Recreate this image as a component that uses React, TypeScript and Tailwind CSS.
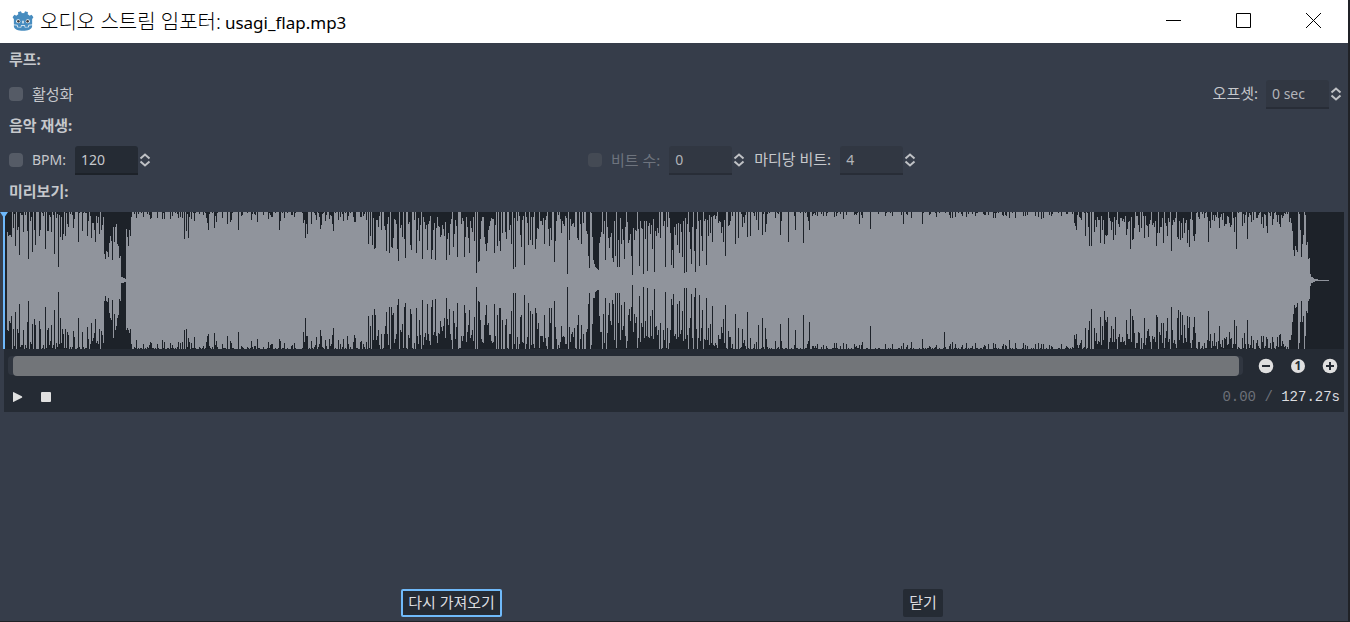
import { useState } from 'react'
import type { ReactNode } from 'react'

const WAVE_WIDTH = 1340
const WAVE_HEIGHT = 137

// [from, to, share of columns with a gap, usual gap, extra gap]
const SECTIONS: [number, number, number, number, number][] = [
  [3, 100, 0.66, 1, 26],
  [100, 117, 0.85, 12, 34],
  [127, 180, 0.5, 0, 8],
  [180, 300, 0.5, 0, 11],
  [300, 363, 0.55, 1, 12],
  [363, 400, 0.8, 5, 33],
  [400, 470, 0.8, 5, 40],
  [470, 588, 0.78, 4, 38],
  [595, 700, 0.78, 8, 46],
  [700, 722, 0.85, 4, 18],
  [722, 770, 0.5, 0, 17],
  [770, 810, 0.45, 0, 11],
  [810, 900, 0.38, 0, 9],
  [900, 1070, 0.42, 0, 7],
  [1070, 1084, 0.7, 1, 15],
  [1084, 1192, 0.82, 5, 25],
  [1192, 1284, 0.78, 1, 19],
  [1284, 1290, 0.8, 5, 20],
]

// [column, gap above, gap below]
const NOTCHES: [number, number, number][] = [
  [3, 20, 19], [4, 24, 18], [5, 23, 28], [6, 23, 26], [7, 25, 33],
  [11, 34, 37], [15, 43, 45], [24, 47, 48], [28, 40, 25], [31, 33, 24], [41, 37, 42],
  [50, 42, 39], [54, 55, 57], [74, 30, 31], [83, 24, 22], [87, 26, 26], [91, 30, 30],
  [100, 42, 48], [101, 47, 53], [102, 39, 48], [103, 40, 47], [104, 45, 51], [108, 48, 49],
  [112, 12, 23], [113, 32, 31], [114, 34, 34], [115, 46, 50], [116, 44, 48],
  [117, 65, 66], [118, 65, 66], [119, 66, 66], [120, 66, 67], [121, 67, 67],
  [122, 17, 19], [123, 25, 21], [124, 34, 19], [125, 18, 16], [126, 24, 20],
  [180, 27, 19], [182, 19, 20], [184, 26, 11], [204, 18, 15], [210, 16, 16], [234, 18, 17],
  [275, 18, 10], [299, 11, 17], [301, 26, 31], [303, 22, 13], [316, 17, 19], [329, 19, 21],
  [364, 32, 33], [368, 33, 34], [370, 37, 40], [371, 36, 34], [382, 39, 37], [385, 41, 42],
  [393, 37, 44], [394, 49, 50], [401, 46, 46], [407, 38, 35], [412, 41, 41], [418, 47, 49],
  [423, 38, 45], [427, 47, 42], [431, 48, 50], [442, 48, 51], [453, 45, 46], [460, 45, 44],
  [472, 61, 62], [474, 50, 48], [475, 49, 47], [482, 39, 44], [490, 41, 45], [496, 39, 41],
  [509, 57, 56], [511, 55, 56], [520, 53, 54], [531, 37, 41], [550, 50, 48], [563, 62, 62],
  [584, 44, 45], [585, 56, 56], [586, 0, 0], [587, 1, 4], [588, 25, 25], [589, 48, 51],
  [590, 52, 51], [591, 55, 57],
  [592, 56, 58], [593, 57, 59], [594, 58, 59], [595, 31, 33], [596, 25, 17],
  [609, 50, 45], [613, 55, 56], [615, 55, 56], [620, 47, 47], [627, 44, 42], [628, 63, 64],
  [635, 54, 53], [639, 62, 62], [643, 59, 61], [650, 60, 60], [661, 55, 57], [667, 53, 50],
  [669, 56, 55], [678, 45, 38], [680, 61, 61], [682, 60, 61], [686, 37, 31], [687, 52, 55],
  [691, 60, 61], [695, 54, 54], [698, 39, 39], [702, 53, 51], [704, 24, 21], [708, 30, 43],
  [719, 30, 30], [721, 44, 44], [724, 14, 18], [731, 32, 35], [734, 26, 21], [743, 25, 37],
  [746, 24, 11], [754, 18, 24], [758, 23, 31], [761, 20, 21], [776, 23, 25], [784, 30, 31],
  [791, 18, 19], [799, 31, 34], [805, 18, 27], [855, 12, 4], [866, 17, 23], [899, 12, 6],
  [918, 12, 10], [940, 0, 17], [1072, 18, 15], [1081, 24, 21], [1085, 34, 28], [1087, 34, 40],
  [1096, 31, 32], [1100, 32, 38], [1111, 23, 32], [1126, 37, 40], [1128, 28, 33],
  [1152, 34, 34], [1159, 31, 26], [1163, 24, 31], [1167, 39, 42], [1174, 27, 39],
  [1176, 28, 37], [1178, 26, 34], [1185, 35, 32], [1204, 30, 38], [1215, 16, 23],
  [1230, 20, 29], [1232, 37, 23], [1243, 27, 29], [1263, 21, 10], [1288, 19, 27],
  [1289, 38, 35], [1290, 44, 44], [1291, 34, 41], [1292, 38, 42], [1293, 40, 46],
  [1294, 0, 0], [1295, 2, 6], [1296, 18, 27], [1297, 45, 48], [1298, 32, 27], [1299, 23, 33],
  [1300, 0, 0], [1301, 3, 13], [1302, 33, 38], [1303, 30, 36], [1304, 47, 48], [1305, 46, 50],
  [1306, 62, 63], [1307, 65, 66], [1308, 65, 66], [1309, 66, 67], [1310, 67, 67],
  [1311, 67, 68], [1312, 67, 68], [1313, 67, 68],
]

function buildWavePath() {
  let seed = 20117
  const random = () => {
    seed = (seed * 16807) % 2147483647
    return seed / 2147483647
  }
  const above: number[] = new Array(WAVE_WIDTH).fill(68)
  const below: number[] = new Array(WAVE_WIDTH).fill(69)

  for (const [from, to, share, usual, extra] of SECTIONS) {
    for (let x = from; x < to; x++) {
      const hasGap = random() < share
      const depth = usual + extra * Math.pow(random(), 1.8)
      above[x] = hasGap ? Math.round(depth * (0.7 + random() * 0.4)) : 0
      below[x] = hasGap ? Math.round(depth * (0.7 + random() * 0.6)) : random() < 0.3 ? 1 : 0
    }
  }
  for (const [x, top, bottom] of NOTCHES) {
    above[x] = top
    below[x] = bottom
  }
  for (let x = 1314; x < 1325; x++) {
    above[x] = 68
    below[x] = 68
  }

  let path = ''
  for (let x = 2; x < 1325; x++) {
    const height = WAVE_HEIGHT - above[x] - below[x]
    if (height > 0) path += `M${x} ${above[x]}h1v${height}h-1z`
  }
  return path
}

const wavePath = buildWavePath()

function GodotLogo() {
  return (
    <svg className="h-[21px] w-[22px]" viewBox="22 36 980 916" aria-hidden="true">
      <path fill="#fff" d="M105 673v33q407 354 814 0v-33z" />
      <path
        fill="#478cbf"
        d="m105 673 152 14q12 1 15 14l4 67 132 10 8-61q2-11 15-15h162q13 4 15 15l8 61 132-10 4-67q3-13 15-14l152-14V427q30-39 56-81-35-59-83-108-43 20-82 47-40-37-88-64 7-51 8-102-59-28-123-42-26 43-46 89-49-7-98 0-20-46-46-89-64 14-123 42 1 51 8 102-48 27-88 64-39-27-82-47-48 49-83 108 26 42 56 81zm0 33v39c0 276 813 276 813 0v-39l-134 12-5 69q-2 10-14 13l-162 11q-12 0-16-11l-10-65H447l-10 65q-4 11-16 11l-162-11q-12-3-14-13l-5-69z"
      />
      <path fill="#fff" d="M483 600c3 34 55 34 58 0v-86c-3-34-55-34-58 0z" />
      <circle fill="#fff" cx="725" cy="526" r="90" />
      <circle fill="#fff" cx="299" cy="526" r="90" />
      <circle fill="#414042" cx="307" cy="532" r="60" />
      <circle fill="#414042" cx="717" cy="532" r="60" />
    </svg>
  )
}

function TitleBar() {
  return (
    <header className="flex h-[43px] items-center bg-white pl-3 text-black">
      <div className="pb-[2px]">
        <GodotLogo />
      </div>
      <h1 className="ml-[6px] flex flex-1 items-baseline gap-1 pt-[2px] text-xl leading-6 font-light">
        <span>오디오 스트림 임포터:</span>
        <span className="text-[17px] font-normal">usagi_flap.mp3</span>
      </h1>
      <div className="flex pb-[2px]">
        <button aria-label="최소화" className="flex h-10 w-[70px] items-center justify-center">
          <svg width="15" height="15" stroke="#000" fill="none">
            <path d="M0 7.5h15" />
          </svg>
        </button>
        <button aria-label="최대화" className="flex h-10 w-[70px] items-center justify-center">
          <svg width="15" height="15" stroke="#000" fill="none">
            <path d="M.5.5h14v14H.5z" />
          </svg>
        </button>
        <button aria-label="창 닫기" className="flex h-10 w-[70px] items-center justify-center">
          <svg width="15" height="15" stroke="#000" fill="none">
            <path d="m0 0 15 15M15 0 0 15" />
          </svg>
        </button>
      </div>
    </header>
  )
}

function Heading({ children }: { children: ReactNode }) {
  return <h2 className="h-6 px-[5px] text-[15px] leading-[22px] font-bold">{children}</h2>
}

interface CheckProps {
  id: string
  disabled?: boolean
  children: ReactNode
}

function Check({ id, disabled, children }: CheckProps) {
  return (
    <div className={`flex items-center gap-[9px] pb-[2px] pl-[5px] ${disabled ? 'text-[#6e747e]' : ''}`}>
      <input
        id={id}
        type="checkbox"
        disabled={disabled}
        className="h-[14px] w-[14px] appearance-none rounded-sm bg-[#555b66] checked:bg-[#70bafa] disabled:bg-[#444a54]"
      />
      <label htmlFor={id}>{children}</label>
    </div>
  )
}

interface SpinBoxProps {
  id: string
  label: string
  defaultValue: string
  readOnly?: boolean
}

function SpinBox({ id, label, defaultValue, readOnly }: SpinBoxProps) {
  return (
    <div className="flex items-center gap-px">
      <input
        id={id}
        aria-label={label}
        defaultValue={defaultValue}
        readOnly={readOnly}
        className={`h-[29px] w-[63px] rounded-t-[3px] border-b-2 px-[6px] text-sm outline-none ${
          readOnly ? 'border-[#282d37] bg-[#313742] text-[#b1b4b9]' : 'border-[#1d2229] bg-[#252b34]'
        }`}
      />
      <button aria-label={`${label} 조절`} className="flex h-[29px] w-3 items-center pb-[2px]">
        <svg width="12" height="14" fill="none" stroke="#bfc1c5" strokeWidth="2">
          <path d="m1.500 5.500 4.500-4 4.500 4M1.500 8.500l4.500 4 4.500-4" />
        </svg>
      </button>
    </div>
  )
}

function Waveform() {
  return (
    <div className="relative h-[137px] bg-[#1d2229]">
      <svg
        className="block h-full w-full"
        viewBox={`0 0 ${WAVE_WIDTH} ${WAVE_HEIGHT}`}
        preserveAspectRatio="none"
        shapeRendering="crispEdges"
        aria-hidden="true"
      >
        <path d={wavePath} fill="#90949c" />
      </svg>
      <svg className="absolute top-0 -left-1" width="9" height="137" fill="#6eb8fb" aria-hidden="true">
        <path d="M0 0h8L5 4.500v132.500H3V4.500z" />
      </svg>
    </div>
  )
}

function Player() {
  const [playing, setPlaying] = useState(false)

  return (
    <section className="h-[200px] bg-[#252b34]">
      <Waveform />
      <div className="flex h-[33px] items-center pl-1">
        <div className="flex h-[19px] flex-1 items-center rounded-sm bg-[#303640] pr-1 pl-[5px]">
          <div className="h-[20px] w-full rounded-sm bg-[#727579]" />
        </div>
        <div className="ml-[9px] flex gap-1">
          <button aria-label="축소" className="flex h-8 w-7 items-center justify-center">
            <svg width="16" height="16" viewBox="0 0 16 16">
              <circle cx="8" cy="8" r="7.300" fill="#e0e0e0" />
              <path d="M4 8h8" stroke="#252b34" strokeWidth="2" />
            </svg>
          </button>
          <button aria-label="확대 초기화" className="flex h-8 w-7 items-center justify-center">
            <span className="flex h-[14px] w-[14px] items-center justify-center rounded-full bg-[#e0e0e0] text-xs leading-none font-bold text-[#252b34]">
              1
            </span>
          </button>
          <button aria-label="확대" className="flex h-8 w-7 items-center justify-center">
            <svg width="16" height="16" viewBox="0 0 16 16">
              <circle cx="8" cy="8" r="7.300" fill="#e0e0e0" />
              <path d="M4 8h8M8 4v8" stroke="#252b34" strokeWidth="2" />
            </svg>
          </button>
        </div>
      </div>
      <div className="flex h-[30px] items-center pr-1 pl-[9px]">
        <button
          aria-label="재생"
          aria-pressed={playing}
          onClick={() => setPlaying(!playing)}
          className="flex h-7 w-7 items-center"
        >
          <svg width="10" height="10" fill="#e0e0e0">
            <path d="M0 .6Q0-.2.8.2l8 4q.9.800 0 1.600l-8 4Q0 10.200 0 9.400z" />
          </svg>
        </button>
        <button aria-label="정지" onClick={() => setPlaying(false)} className="flex h-7 w-7 items-center">
          <span className="h-[10px] w-[10px] rounded-[1px] bg-[#e0e0e0]" />
        </button>
        <p className="ml-auto font-['Liberation_Mono',monospace] text-sm whitespace-pre text-[#dcdde0]">
          <span className="text-[#6c7078]">0.00 / </span>127.27s
        </p>
      </div>
    </section>
  )
}

export default function App() {
  return (
    <div className="flex min-h-screen bg-[#202227] pr-[2px] pb-px font-['Noto_Sans','Noto_Sans_CJK_KR',sans-serif]">
      <div className="flex flex-1 flex-col bg-[#363d4a] text-[15px] leading-5 text-[#c6c8cc]">
        <TitleBar />
        <main className="flex flex-1 flex-col px-1 pt-[5px] pb-1">
          <Heading>루프:</Heading>
          <div className="mt-2 mb-[5px] flex h-[29px] items-center justify-between">
            <Check id="loop">활성화</Check>
            <div className="flex items-center gap-2 pr-[2px]">
              <label htmlFor="offset" className="pb-1">
                오프셋:
              </label>
              <SpinBox id="offset" label="오프셋" defaultValue="0 sec" readOnly />
            </div>
          </div>

          <Heading>음악 재생:</Heading>
          <div className="mt-2 mb-[5px] flex h-[29px] items-center gap-1">
            <div className="flex items-center gap-[9px]">
              <Check id="bpm-enabled">
                <span className="text-sm">BPM:</span>
              </Check>
              <SpinBox id="bpm" label="BPM" defaultValue="120" />
            </div>
            <div className="flex flex-1 items-center justify-center gap-[9px]">
              <Check id="beats-enabled" disabled>
                비트 수:
              </Check>
              <SpinBox id="beats" label="비트 수" defaultValue="0" readOnly />
              <label htmlFor="bar-beats" className="pb-1">
                마디당 비트:
              </label>
              <SpinBox id="bar-beats" label="마디당 비트" defaultValue="4" readOnly />
            </div>
          </div>

          <Heading>미리보기:</Heading>
          <div className="mt-2">
            <Player />
          </div>

          <footer className="-ml-1 mt-auto flex justify-evenly pt-4 text-[#dcdde0]">
            <button className="h-7 rounded-xs border-2 border-[#70bafa] bg-[#252b34] px-[5px] pb-[2px] leading-[22px]">
              다시 가져오기
            </button>
            <button className="h-7 rounded-xs bg-[#252b34] px-[6px] pb-[2px]">닫기</button>
          </footer>
        </main>
      </div>
    </div>
  )
}
